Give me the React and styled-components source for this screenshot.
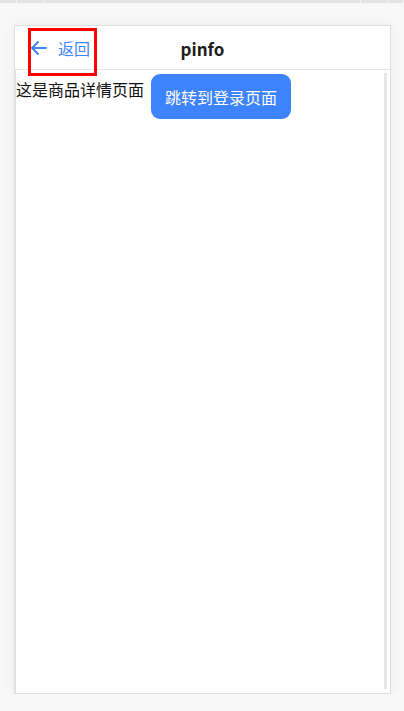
import React from "react";
import styled, { createGlobalStyle } from "styled-components";

const Global = createGlobalStyle`
  html, body { margin: 0; padding: 0; background: #f8f8f8; }
  body { font-family: "Noto Sans CJK SC", "Noto Sans", sans-serif; }
  * { box-sizing: border-box; }
`;

const TopStrip = styled.div`
  height: 3px;
  background: #e3e3e3;
  display: flex;
`;

const StripCell = styled.div`
  width: ${(p) => p.$w}px;
  flex: ${(p) => (p.$grow ? 1 : "none")};
  border-right: 1px solid #f4f4f4;
`;

const Frame = styled.div`
  position: relative;
  margin: 22px 0 0 14px;
  width: 377px;
  height: 669px;
  background: #fff;
  border: 1px solid #dedede;
  box-shadow: 0 0 14px rgba(0, 0, 0, 0.05);
  display: flex;
  flex-direction: column;
`;

const Header = styled.header`
  height: 44px;
  border-bottom: 1px solid #e4e4e4;
  display: grid;
  grid-template-columns: 1fr auto 1fr;
  align-items: center;
`;

const Back = styled.div`
  display: flex;
  align-items: center;
  gap: 11px;
  padding: 1px 0 0 15px;
  color: #3f86ff;
  font-size: 16px;
`;

const Title = styled.div`
  font-size: 17px;
  font-weight: 700;
  color: #1c1c1c;
  padding-top: 1px;
`;

const Highlight = styled.div`
  position: absolute;
  left: 13px;
  top: 2px;
  width: 69px;
  height: 48px;
  border: 3px solid #ff0000;
  pointer-events: none;
`;

const Body = styled.div`
  flex: 1;
  display: flex;
  border-left: 1px solid #e2e2e2;
`;

const Content = styled.div`
  flex: 1;
  display: flex;
  align-items: flex-start;
  gap: 7px;
`;

const Text = styled.span`
  margin-top: 8px;
  font-size: 16px;
  line-height: 23px;
  color: #111;
`;

const Button = styled.button`
  margin-top: 4px;
  width: 140px;
  height: 45px;
  border: none;
  border-radius: 9px;
  background: #3d83fc;
  color: #fff;
  font-family: inherit;
  font-size: 16px;
  padding: 0;
  padding-top: 1px;
`;

const Scrollbar = styled.div`
  width: 3px;
  margin: 3px 3px 4px 0;
  background: #e6e6e6;
`;

export default function App() {
  return (
    <>
      <Global />
      <TopStrip>
        <StripCell $w={17} />
        <StripCell $w={27} />
        <StripCell $w={317} />
        <StripCell $w={28} />
        <StripCell $grow />
      </TopStrip>
      <Frame>
        <Header>
          <Back>
            <svg width="17" height="14" viewBox="0 0 17 14" fill="none">
              <path
                d="M16 7H2M8 1L2 7l6 6"
                stroke="#3f86ff"
                strokeWidth="2"
                strokeLinecap="round"
                strokeLinejoin="round"
              />
            </svg>
            <span>返回</span>
          </Back>
          <Title>pinfo</Title>
          <div />
        </Header>
        <Body>
          <Content>
            <Text>这是商品详情页面</Text>
            <Button>跳转到登录页面</Button>
          </Content>
          <Scrollbar />
        </Body>
        <Highlight />
      </Frame>
    </>
  );
}
